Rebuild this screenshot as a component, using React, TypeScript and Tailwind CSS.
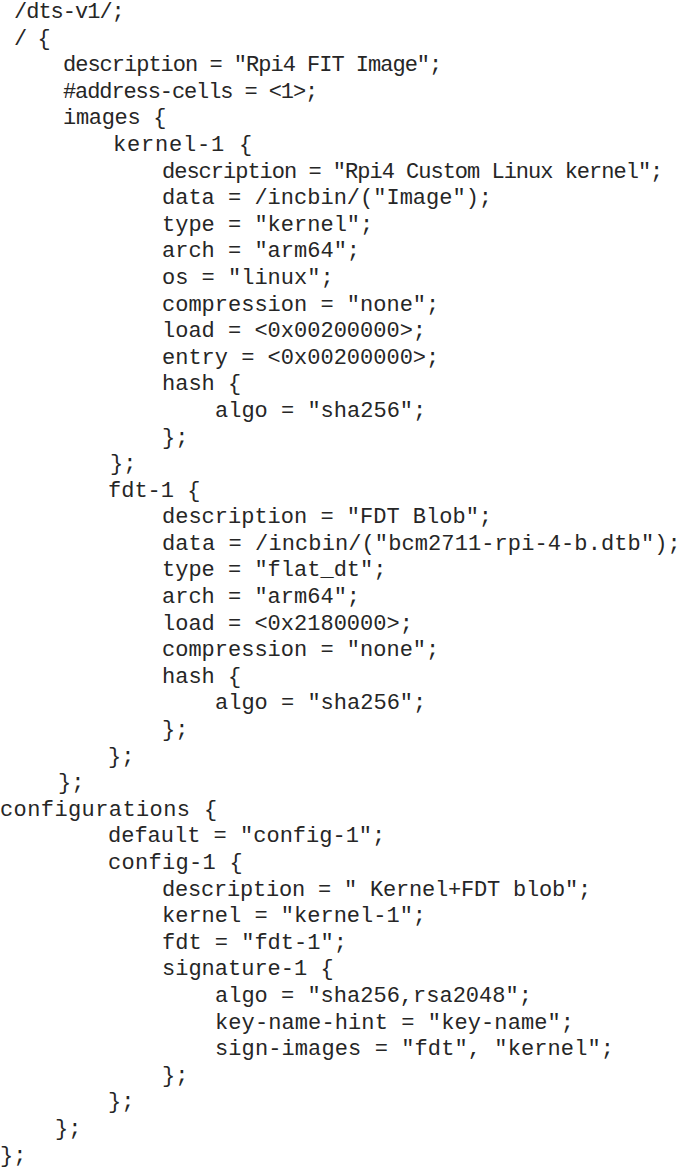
type Line = { pad: string; text: string; track?: string }

// indent per line, taken from the listing; a few lines are set tighter or looser
const lines: Line[] = [
  { pad: 'pl-[14px]', text: '/dts-v1/;', track: 'tracking-[-1px]' },
  { pad: 'pl-[14px]', text: '/ {', track: 'tracking-[-1.4px]' },
  { pad: 'pl-[63px]', text: 'description = "Rpi4 FIT Image";', track: 'tracking-[-1px]' },
  { pad: 'pl-[63px]', text: '#address-cells = <1>;', track: 'tracking-[-1.1px]' },
  { pad: 'pl-[63px]', text: 'images {', track: 'tracking-[-0.3px]' },
  { pad: 'pl-[113px]', text: 'kernel-1 {', track: 'tracking-[0.8px]' },
  { pad: 'pl-[162px]', text: 'description = "Rpi4 Custom Linux kernel";', track: 'tracking-[-1px]' },
  { pad: 'pl-[162px]', text: 'data = /incbin/("Image");' },
  { pad: 'pl-[162px]', text: 'type = "kernel";' },
  { pad: 'pl-[162px]', text: 'arch = "arm64";' },
  { pad: 'pl-[162px]', text: 'os = "linux";' },
  { pad: 'pl-[162px]', text: 'compression = "none";' },
  { pad: 'pl-[162px]', text: 'load = <0x00200000>;' },
  { pad: 'pl-[162px]', text: 'entry = <0x00200000>;' },
  { pad: 'pl-[162px]', text: 'hash {' },
  { pad: 'pl-[215px]', text: 'algo = "sha256";' },
  { pad: 'pl-[162px]', text: '};' },
  { pad: 'pl-[110px]', text: '};' },
  { pad: 'pl-[108px]', text: 'fdt-1 {' },
  { pad: 'pl-[162px]', text: 'description = "FDT Blob";' },
  { pad: 'pl-[162px]', text: 'data = /incbin/("bcm2711-rpi-4-b.dtb");', track: 'tracking-[0.1px]' },
  { pad: 'pl-[162px]', text: 'type = "flat_dt";' },
  { pad: 'pl-[162px]', text: 'arch = "arm64";' },
  { pad: 'pl-[162px]', text: 'load = <0x2180000>;' },
  { pad: 'pl-[162px]', text: 'compression = "none";' },
  { pad: 'pl-[162px]', text: 'hash {' },
  { pad: 'pl-[215px]', text: 'algo = "sha256";' },
  { pad: 'pl-[162px]', text: '};' },
  { pad: 'pl-[108px]', text: '};' },
  { pad: 'pl-[58px]', text: '};' },
  { pad: 'pl-0', text: 'configurations {', track: 'tracking-[0.4px]' },
  { pad: 'pl-[108px]', text: 'default = "config-1";' },
  { pad: 'pl-[108px]', text: 'config-1 {', track: 'tracking-[0.3px]' },
  { pad: 'pl-[162px]', text: 'description = " Kernel+FDT blob";', track: 'tracking-[-0.2px]' },
  { pad: 'pl-[162px]', text: 'kernel = "kernel-1";' },
  { pad: 'pl-[162px]', text: 'fdt = "fdt-1";' },
  { pad: 'pl-[162px]', text: 'signature-1 {' },
  { pad: 'pl-[215px]', text: 'algo = "sha256,rsa2048";' },
  { pad: 'pl-[215px]', text: 'key-name-hint = "key-name";', track: 'tracking-[0.1px]' },
  { pad: 'pl-[215px]', text: 'sign-images = "fdt", "kernel";', track: 'tracking-[0.1px]' },
  { pad: 'pl-[162px]', text: '};' },
  { pad: 'pl-[108px]', text: '};' },
  { pad: 'pl-[55px]', text: '};' },
  { pad: 'pl-0', text: '};' },
]

export default function App() {
  return (
    <div className="h-[1171px] w-[685px] overflow-hidden bg-white font-['Liberation_Mono',monospace] text-[22px] leading-[26.6px] text-[#262626]">
      {lines.map((line, i) => (
        <div key={i} className={`whitespace-pre ${line.pad} ${line.track ?? ''}`}>
          {line.text}
        </div>
      ))}
    </div>
  )
}
